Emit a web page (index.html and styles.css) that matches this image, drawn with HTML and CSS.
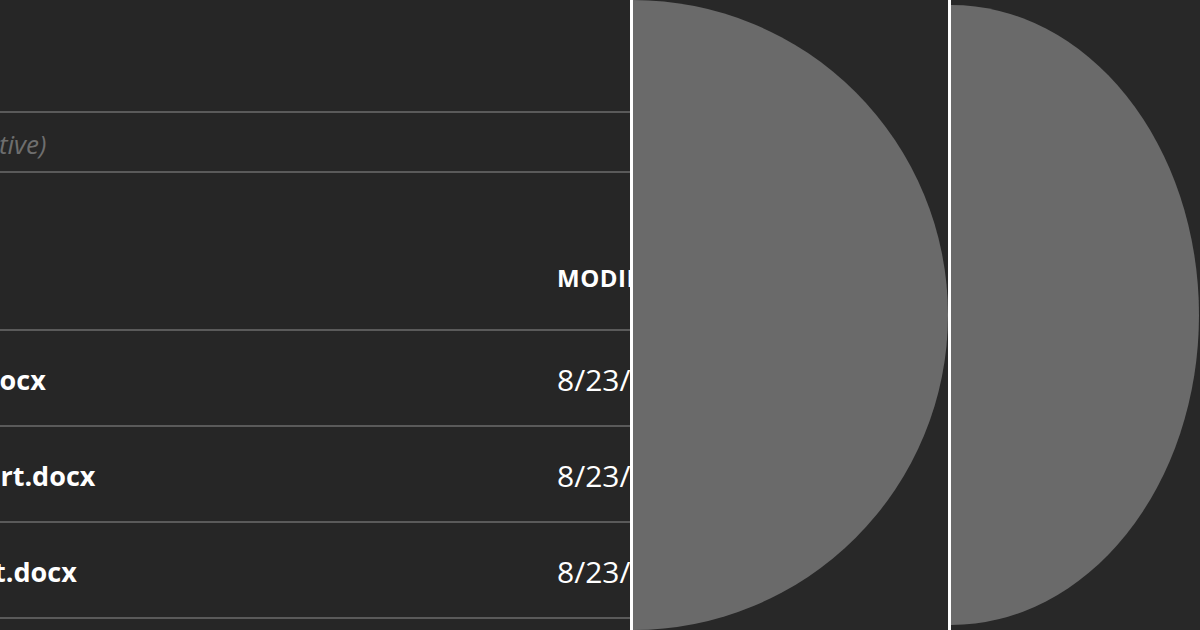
FILE: index.html
```html
<!DOCTYPE html>
<html>
<head>
<meta name="viewport" content="width=device-width, initial-scale=1">
<link rel="stylesheet" href="styles.css">
</head>
<body>

<div class="screen">

  <div class="pane files">
    <div class="inner">
      <div class="top"></div>
      <div class="search">Search (inactive)</div>

      <div class="list">
        <div class="row head">
          <span class="name">Name</span>
          <span class="date">Modified</span>
        </div>
        <div class="row">
          <span class="name">Sales brief.docx</span>
          <span class="date">8/23/2023 10:14 AM</span>
        </div>
        <div class="row">
          <span class="name">Annual report.docx</span>
          <span class="date">8/23/2023 9:52 AM</span>
        </div>
        <div class="row">
          <span class="name">Budget draft.docx</span>
          <span class="date">8/23/2023 9:30 AM</span>
        </div>
      </div>
    </div>
  </div>

  <div class="pane mid">
    <div class="half big"></div>
  </div>

  <div class="pane end">
    <div class="half small"></div>
  </div>

</div>

</body>
</html>
```

FILE: styles.css
```css
html, body {
  margin: 0;
  padding: 0;
}

body {
  background-color: #272727;
  font-family: "Open Sans", "Noto Sans", sans-serif;
  color: #ffffff;
}

.screen {
  display: flex;
  width: 1200px;
  height: 630px;
  overflow: hidden;
  gap: 3px;
  background-color: #ffffff;
}

.pane {
  height: 630px;
  overflow: hidden;
  flex-shrink: 0;
}

/* ******** file list ******** */

.files {
  width: 630px;
  background-color: #262626;
}

.inner {
  margin-left: -165px;
  width: 1100px;
}

.top {
  height: 111px;
}

.search {
  box-sizing: border-box;
  height: 62px;
  border-top: 2px solid #5a5a5a;
  border-bottom: 2px solid #5a5a5a;
  padding: 4px 0 0 24px;
  display: flex;
  align-items: center;
  font-style: italic;
  font-size: 26px;
  color: #6e6e6e;
}

.row {
  display: grid;
  grid-template-columns: 722px 1fr;
  align-items: center;
  box-sizing: border-box;
  height: 96px;
  padding-top: 3px;
  border-bottom: 2px solid #5a5a5a;
  white-space: nowrap;
}

.row .name {
  font-weight: 700;
  font-size: 27px;
}

.row .date {
  font-size: 30px;
}

.head {
  height: 158px;
  align-items: end;
  padding-top: 0;
}

.head .name,
.head .date {
  font-weight: 700;
  font-size: 24px;
  text-transform: uppercase;
  letter-spacing: 0.5px;
  padding-bottom: 35px;
}

/* ******** preview panes ******** */

.mid {
  width: 315px;
  background-color: #282828;
}

.end {
  width: 249px;
  background-color: #282828;
  display: flex;
  align-items: center;
}

.half {
  background-color: #6a6a6a;
}

.big {
  width: 315px;
  height: 630px;
  border-radius: 0 315px 315px 0 / 0 315px 315px 0;
}

.small {
  width: 248px;
  height: 620px;
  border-radius: 0 248px 248px 0 / 0 310px 310px 0;
}
```
